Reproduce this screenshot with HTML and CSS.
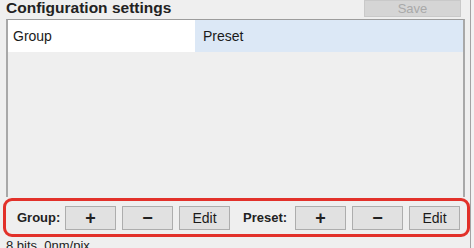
FILE: index.html
```html
<!DOCTYPE html>
<html>
<head>
<meta charset="utf-8">
<link rel="stylesheet" href="styles.css">
</head>
<body>
<div class="window">
  <div class="main">
    <div class="top">
      <div class="title">Configuration settings</div>
      <button class="save">Save</button>
    </div>
    <div class="frame">
      <div class="head">
        <div class="cell cell-group">Group</div>
        <div class="cell cell-preset">Preset</div>
      </div>
    </div>
    <div class="toolbar">
      <div class="highlight"></div>
      <span class="label label-group">Group:</span>
      <button class="btn sym">+</button>
      <button class="btn sym">&minus;</button>
      <button class="btn edit">Edit</button>
      <span class="label label-preset">Preset:</span>
      <button class="btn sym">+</button>
      <button class="btn sym">&minus;</button>
      <button class="btn edit">Edit</button>
    </div>
    <div class="status">8 bits, 0nm/pix</div>
  </div>
  <div class="gutter"></div>
</div>
</body>
</html>
```
FILE: styles.css
```css
* { box-sizing: border-box; }
html, body { margin: 0; padding: 0; }
body {
  width: 474px;
  height: 248px;
  overflow: hidden;
  background: #efefef;
  font-family: "Liberation Sans", Arial, sans-serif;
  color: #1a1a1a;
}
.window {
  display: flex;
  width: 474px;
  height: 248px;
  overflow: hidden;
}
.main {
  width: 470px;
  display: flex;
  flex-direction: column;
}
.main > * { flex-shrink: 0; }
.gutter {
  width: 4px;
  border-left: 1px solid #a3a3a3;
  background: #f2f2f2;
}
.top {
  height: 19px;
  display: flex;
  align-items: flex-start;
  padding-left: 6px;
}
.title {
  font-weight: bold;
  font-size: 15.5px;
  line-height: 16px;
  color: #222;
}
.save {
  margin-left: auto;
  margin-right: 9px;
  width: 97px;
  height: 17px;
  padding: 0;
  border: 1px solid #c9c9c9;
  background: #d5d5d5;
  color: #a9a9a9;
  font-family: "Liberation Sans", Arial, sans-serif;
  font-size: 13px;
  line-height: 15px;
}
.frame {
  margin-left: 6px;
  width: 459px;
  height: 178px;
  border-top: 1px solid #9c9c9c;
  border-left: 2px solid #a8a8a8;
  border-right: 2px solid #a8a8a8;
  background: #efefef;
}
.head {
  display: grid;
  grid-template-columns: 187px 1fr;
  height: 32px;
}
.cell {
  font-size: 14px;
  line-height: 32px;
  padding-left: 5px;
}
.cell-group { background: #ffffff; }
.cell-preset { background: #dce8f6; padding-left: 8px; }
.toolbar {
  position: relative;
  height: 41px;
  display: flex;
  align-items: center;
  padding-left: 17px;
}
.highlight {
  position: absolute;
  left: 3px;
  top: 1px;
  width: 467px;
  height: 39px;
  border: 3px solid #e2312a;
  border-radius: 9px;
}
.label {
  font-weight: bold;
  font-size: 13px;
  color: #222;
}
.label-group { width: 48px; }
.label-preset { width: 52px; margin-left: 13px; }
.btn {
  width: 51px;
  height: 24px;
  padding: 0;
  border: 1px solid #adadad;
  background: #e1e1e1;
  font-family: "Liberation Sans", Arial, sans-serif;
  font-size: 14px;
  color: #1a1a1a;
}
.btn + .btn { margin-left: 6px; }
.sym {
  font-weight: bold;
  font-size: 18px;
  line-height: 20px;
  color: #222;
}
.status {
  padding-left: 6px;
  font-size: 13px;
  line-height: 14px;
  margin-top: 1px;
  color: #222;
}
```
